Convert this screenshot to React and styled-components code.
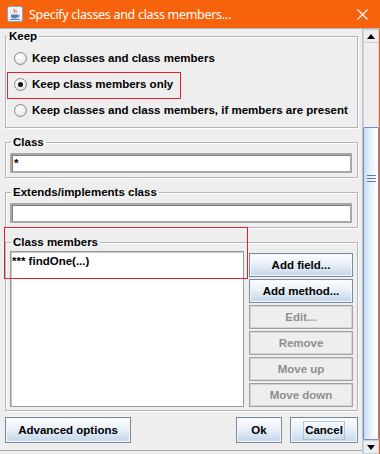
import React from 'react';
import styled, { createGlobalStyle } from 'styled-components';

const Global = createGlobalStyle`
  html, body { margin: 0; padding: 0; }
  body {
    width: 380px; height: 454px; overflow: hidden; background: #eeeeee;
    font-family: "Liberation Sans", Arial, sans-serif;
  }
`;

const FONT = `bold 11.5px "Liberation Sans", Arial, sans-serif`;

const Window = styled.div`
  width: 380px; height: 454px;
  display: flex; flex-direction: column;
  background: #eeeeee; position: relative; overflow: hidden;
`;

const TitleBar = styled.div`
  height: 28px; flex-shrink: 0;
  background: #f7630c; color: #fff;
  display: flex; align-items: center;
  padding-left: 7px;
  border-bottom: 1px solid #b9b9b9;
`;

const Title = styled.span`
  font-family: "Noto Sans", "Liberation Sans", sans-serif;
  font-size: 12.5px; letter-spacing: -0.3px; margin-left: 6px; flex: 1; white-space: nowrap;
`;

const CloseBox = styled.div`
  width: 36px; height: 28px; display: flex; align-items: center; justify-content: center;
`;

const Frame = styled.div`
  flex: 1; display: flex; min-height: 0;
  border-right: 1px solid #f7630c;
`;

const Content = styled.div`
  flex: 1; display: flex; flex-direction: column; min-width: 0;
  position: relative;
`;

const Group = styled.fieldset`
  margin: ${p => p.$top}px 4px 0 5px;
  padding: ${p => p.$pad};
  border: 1px solid #b4b4b4;
  box-shadow: inset 1px 1px 0 #fff, 1px 1px 0 #fff;
  min-width: 0;
  display: flex; flex-direction: ${p => p.$dir || 'column'};
`;

const Legend = styled.legend`
  font: ${FONT}; color: #000; line-height: 14px;
  padding: 0 2px; margin-left: 1px; white-space: nowrap;
`;

const RadioRow = styled.label`
  height: 26px; display: flex; align-items: center; white-space: nowrap;
  padding-left: 8px; font: ${FONT}; color: #000;
`;

const RadioCircle = styled.span`
  width: 11px; height: 11px; border-radius: 50%;
  border: 1px solid #8a8a8a;
  background: radial-gradient(circle at 40% 35%, #ffffff 0%, #f2f2f2 45%, #cfcfcf 100%);
  display: flex; align-items: center; justify-content: center;
  margin-right: 5px; flex-shrink: 0;
  &::after {
    content: ""; width: 5px; height: 5px; border-radius: 50%;
    background: #111; display: ${p => (p.$on ? 'block' : 'none')};
  }
`;

const TextField = styled.div`
  height: 16px; border: 2px solid #a8a8a8; box-shadow: inset 1px 1px 0 #808080;
  background: #fff; font: ${FONT}; line-height: 16px; padding-left: 2px; color: #000;
`;

const List = styled.div`
  flex: 1; background: #fff;
  border: 1px solid #9a9a9a; box-shadow: inset 1px 1px 0 #c6c6c6;
  font: ${FONT}; padding: 1px 0 0 1px; line-height: 16px; white-space: nowrap;
`;

const ButtonCol = styled.div`
  width: 104px; margin-left: 5px; padding-top: 2px;
  display: flex; flex-direction: column; gap: 2px;
`;

const Button = styled.button`
  height: ${p => p.$h || 24}px; width: ${p => (p.$w ? p.$w + 'px' : 'auto')};
  font: ${FONT}; padding: 0; margin: 0; white-space: nowrap;
  color: ${p => (p.disabled ? '#8e8e8e' : '#000')};
  border: 1px solid ${p => (p.disabled ? '#a2a2a2' : '#7a8a9c')};
  box-shadow: ${p => (p.disabled ? 'inset 0 0 0 1px #d4d4d4' : 'inset 0 0 0 1px #f4f8fd')};
  background: ${p => (p.disabled ? '#eeeeee' : 'linear-gradient(#fdfeff 0%, #e9f0f8 45%, #c2d5ea 100%)')};
  display: flex; align-items: center; justify-content: center;
`;

const FocusText = styled.span`
  outline: 1px solid #b3c2d4; padding: 0 1px; line-height: 17px;
`;

const BottomBar = styled.div`
  display: flex; align-items: center;
  margin: 6px 4px 0 5px;
  gap: 8px;
`;

const Spacer = styled.div` flex: 1; `;

const BottomLine = styled.div`
  margin-top: 7px; height: 1px; background: #a8a8a8;
`;

const Highlight = styled.div`
  position: absolute; border: 1px solid #e0222a; pointer-events: none;
  left: ${p => p.$x}px; top: ${p => p.$y}px; width: ${p => p.$w}px; height: ${p => p.$h}px;
`;

const Scrollbar = styled.div`
  width: 16px; display: flex; flex-direction: column;
  border-left: 1px solid #b9c6d6; background: #eeeeee;
`;

const ArrowBtn = styled.div`
  height: 14px; flex-shrink: 0; display: flex; align-items: center; justify-content: center;
  background: #eeeeee; border: 1px solid #c8d3e0; box-sizing: border-box;
`;

const Track = styled.div`
  height: 84px; flex-shrink: 0;
  border-left: 1px solid #c8d3e0; border-right: 1px solid #c8d3e0;
  background: #eeeeee;
`;

const Thumb = styled.div`
  flex: 1; border: 1px solid #6f8fc2; border-radius: 1px;
  background: linear-gradient(90deg, #c9dbf0 0%, #e7f0fa 45%, #ffffff 100%);
  display: flex; flex-direction: column; align-items: center; padding-top: 47px;
`;

const Grip = styled.div`
  width: 9px; height: 1px; background: #5a7fb8; margin-bottom: 2px;
`;

const JavaIcon = () => (
  <svg width="16" height="16" viewBox="0 0 16 16">
    <rect x="0.5" y="0.5" width="15" height="15" rx="2" fill="#eef4fb" stroke="#8aa4c8" />
    <path d="M7 3 C6 4.5 8.5 5 7.5 7" stroke="#e8741d" strokeWidth="1.2" fill="none" />
    <path d="M9 3.5 C8.2 4.8 10 5.2 9.2 6.8" stroke="#e8741d" strokeWidth="1" fill="none" />
    <path d="M4 8.5 H11 V10.5 C11 12 9.5 12.5 7.5 12.5 C5.5 12.5 4 12 4 10.5 Z" fill="#5a80b8" />
    <path d="M11 9 C13 9 13 11 11 11" stroke="#5a80b8" strokeWidth="1" fill="none" />
    <rect x="3" y="13" width="10" height="1" fill="#5a80b8" />
  </svg>
);

const CloseIcon = () => (
  <svg width="11" height="11" viewBox="0 0 11 11">
    <path d="M0.5 0.5 L10.5 10.5 M10.5 0.5 L0.5 10.5" stroke="#fff" strokeWidth="1.1" />
  </svg>
);

const UpArrow = () => (
  <svg width="8" height="5" viewBox="0 0 8 5"><path d="M0 5 L4 0 L8 5 Z" fill="#000" /></svg>
);
const DownArrow = () => (
  <svg width="8" height="5" viewBox="0 0 8 5"><path d="M0 0 L4 5 L8 0 Z" fill="#000" /></svg>
);

const radios = [
  'Keep classes and class members',
  'Keep class members only',
  'Keep classes and class members, if members are present',
];

export default function App() {
  return (
    <Window>
      <Global />
      <TitleBar>
        <JavaIcon />
        <Title>Specify classes and class members...</Title>
        <CloseBox><CloseIcon /></CloseBox>
      </TitleBar>
      <Frame>
        <Content>
          <Group $top={0} $pad="2px 0 4px 0">
            <Legend>Keep</Legend>
            {radios.map((r, i) => (
              <RadioRow key={r}>
                <RadioCircle $on={i === 1} />
                {r}
              </RadioRow>
            ))}
          </Group>
          <Group $top={7} $pad="4px 5px 4px 4px">
            <Legend>Class</Legend>
            <TextField>*</TextField>
          </Group>
          <Group $top={7} $pad="4px 5px 4px 4px">
            <Legend>Extends/implements class</Legend>
            <TextField />
          </Group>
          <Group $top={7} $pad="2px 4px 3px 4px" $dir="row">
            <Legend>Class members</Legend>
            <List>*** findOne(...)</List>
            <ButtonCol>
              <Button>Add field...</Button>
              <Button>Add method...</Button>
              <Button disabled>Edit...</Button>
              <Button disabled>Remove</Button>
              <Button disabled>Move up</Button>
              <Button disabled>Move down</Button>
            </ButtonCol>
          </Group>
          <BottomBar>
            <Button $h={26} $w={126}>Advanced options</Button>
            <Spacer />
            <Button $h={26} $w={46}>Ok</Button>
            <Button $h={26} $w={68}><FocusText>Cancel</FocusText></Button>
          </BottomBar>
          <BottomLine />
          <Highlight $x={7} $y={43} $w={172} $h={25} />
          <Highlight $x={4} $y={198} $w={242} $h={50} />
        </Content>
        <Scrollbar>
          <ArrowBtn><UpArrow /></ArrowBtn>
          <Track />
          <Thumb>
            <Grip /><Grip /><Grip />
          </Thumb>
          <ArrowBtn><DownArrow /></ArrowBtn>
        </Scrollbar>
      </Frame>
    </Window>
  );
}
